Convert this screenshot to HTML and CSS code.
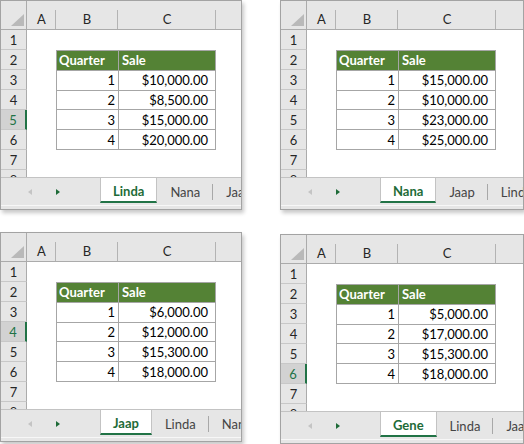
FILE: index.html
```html
<!DOCTYPE html>
<html lang="en">
<head>
<meta charset="utf-8" />
<title>Sheets Linda, Nana, Jaap and Gene</title>
<link rel="stylesheet" href="styles.css">
</head>
<body>

<main class="board">

<!-- Linda -->
<div class="panel">
	<div class="sheet">
		<div class="corner"></div>
		<div class="col">A</div><div class="col">B</div><div class="col">C</div><div class="col last"></div>
		<div class="row">1</div>
		<div class="row">2</div>
		<div class="row">3</div>
		<div class="row">4</div>
		<div class="row sel">5</div>
		<div class="row">6</div>
		<div class="row">7</div>
		<div class="row">8</div>
		<div class="data">
			<div class="th">Quarter</div><div class="th">Sale</div>
			<div class="q">1</div><div class="s">$10,000.00</div>
			<div class="q">2</div><div class="s">$8,500.00</div>
			<div class="q">3</div><div class="s">$15,000.00</div>
			<div class="q">4</div><div class="s">$20,000.00</div>
		</div>
	</div>
	<div class="tabbar">
		<div class="nav"><i class="prev"></i><i class="next"></i></div>
		<div class="tab active">Linda</div>
		<div class="tab">Nana</div>
		<div class="tab">Jaap</div>
	</div>
	<div class="status"></div>
</div>

<!-- Nana -->
<div class="panel">
	<div class="sheet">
		<div class="corner"></div>
		<div class="col">A</div><div class="col">B</div><div class="col">C</div><div class="col last"></div>
		<div class="row">1</div>
		<div class="row">2</div>
		<div class="row">3</div>
		<div class="row">4</div>
		<div class="row">5</div>
		<div class="row">6</div>
		<div class="row">7</div>
		<div class="row">8</div>
		<div class="data">
			<div class="th">Quarter</div><div class="th">Sale</div>
			<div class="q">1</div><div class="s">$15,000.00</div>
			<div class="q">2</div><div class="s">$10,000.00</div>
			<div class="q">3</div><div class="s">$23,000.00</div>
			<div class="q">4</div><div class="s">$25,000.00</div>
		</div>
	</div>
	<div class="tabbar">
		<div class="nav"><i class="prev"></i><i class="next"></i></div>
		<div class="tab active">Nana</div>
		<div class="tab">Jaap</div>
		<div class="tab">Linda</div>
	</div>
	<div class="status"></div>
</div>

<!-- Jaap -->
<div class="panel">
	<div class="sheet">
		<div class="corner"></div>
		<div class="col">A</div><div class="col">B</div><div class="col">C</div><div class="col last"></div>
		<div class="row">1</div>
		<div class="row">2</div>
		<div class="row">3</div>
		<div class="row sel">4</div>
		<div class="row">5</div>
		<div class="row">6</div>
		<div class="row">7</div>
		<div class="row">8</div>
		<div class="data">
			<div class="th">Quarter</div><div class="th">Sale</div>
			<div class="q">1</div><div class="s">$6,000.00</div>
			<div class="q">2</div><div class="s">$12,000.00</div>
			<div class="q">3</div><div class="s">$15,300.00</div>
			<div class="q">4</div><div class="s">$18,000.00</div>
		</div>
	</div>
	<div class="tabbar">
		<div class="nav"><i class="prev"></i><i class="next"></i></div>
		<div class="tab active">Jaap</div>
		<div class="tab">Linda</div>
		<div class="tab">Nana</div>
	</div>
	<div class="status"></div>
</div>

<!-- Gene -->
<div class="panel low">
	<div class="sheet">
		<div class="corner"></div>
		<div class="col">A</div><div class="col">B</div><div class="col">C</div><div class="col last"></div>
		<div class="row">1</div>
		<div class="row">2</div>
		<div class="row">3</div>
		<div class="row">4</div>
		<div class="row">5</div>
		<div class="row sel">6</div>
		<div class="row">7</div>
		<div class="row">8</div>
		<div class="data">
			<div class="th">Quarter</div><div class="th">Sale</div>
			<div class="q">1</div><div class="s">$5,000.00</div>
			<div class="q">2</div><div class="s">$17,000.00</div>
			<div class="q">3</div><div class="s">$15,300.00</div>
			<div class="q">4</div><div class="s">$18,000.00</div>
		</div>
	</div>
	<div class="tabbar">
		<div class="nav"><i class="prev"></i><i class="next"></i></div>
		<div class="tab active">Gene</div>
		<div class="tab">Linda</div>
		<div class="tab">Jaap</div>
	</div>
	<div class="status"></div>
</div>

</main>

</body>
</html>
```
FILE: styles.css
```css
body {
	margin: 0;
	background: #fff;
	font: 13px Lato, "Open Sans", sans-serif;
	color: #000;
}
.board {
	display: grid;
	grid-template-columns: 242px 244px;
	column-gap: 38px;
	row-gap: 22px;
	align-items: start;
}

/* --------------------------------- */

.panel {
	border: 1px solid #a3a3a3;
	box-shadow: 2px 3px 4px rgba(0,0,0,0.22);
	overflow: hidden;
	background: #e6e6e6;
}
.panel.low {
	margin-top: 2px;
}

.sheet {
	display: grid;
	grid-template-columns: 26px 29px 62px 98px 1fr;
	grid-template-rows: 29px repeat(8, 20px);
	height: 176px;
	overflow: hidden;
	background: #fff;
}
.sheet > div {
	box-sizing: border-box;
}

.corner {
	position: relative;
	background: #e6e6e6;
	border-right: 1px solid #ababab;
	border-bottom: 1px solid #ababab;
}
.corner::after {
	content: "";
	position: absolute;
	right: 2px; bottom: 3px;
	width: 13px; height: 12px;
	background: #b9b9b9;
	clip-path: polygon(100% 0, 100% 100%, 0 100%);
}

.col {
	display: flex;
	justify-content: center;
	align-items: flex-end;
	padding-bottom: 2px;
	line-height: 16px;
	color: #262626;
	border-bottom: 1px solid #ababab;
	background:
		linear-gradient(#b3b3b3, #b3b3b3) right bottom / 1px 19px no-repeat,
		#e6e6e6;
}
.col.last {
	background: #e6e6e6;
}

.row {
	grid-column: 1;
	display: flex;
	justify-content: center;
	align-items: center;
	color: #262626;
	background: #e6e6e6;
	border-right: 1px solid #ababab;
	border-bottom: 1px solid #c8c8c8;
}
.row.sel {
	background: #d2d2d2;
	color: #217346;
	border-right: 2px solid #217346;
}

/* --------------------------------- */

.data {
	grid-column: 3 / 5;
	grid-row: 3 / 8;
	display: grid;
	grid-template-columns: 61px 96px;
	grid-template-rows: repeat(5, 1fr);
	gap: 1px;
	padding: 1px;
	background: #a6a6a6;
}
.data > div {
	display: flex;
	align-items: center;
	background: #fff;
	white-space: nowrap;
}
.data .th {
	background: #548235;
	color: #fff;
	font-weight: bold;
	padding-left: 2px;
}
.data .th + .th {
	padding-left: 3px;
}
.data .q {
	justify-content: flex-end;
	padding-right: 3px;
}
.data .s {
	justify-content: flex-end;
	padding-right: 7px;
}

/* --------------------------------- */

.tabbar {
	display: flex;
	align-items: flex-start;
	height: 28px;
	box-sizing: border-box;
	border-top: 1px solid #c3c3c3;
	background: #e6e6e6;
	white-space: nowrap;
}
.nav {
	flex: none;
	width: 99px;
	height: 27px;
	box-sizing: border-box;
	display: flex;
	align-items: center;
	gap: 24px;
	padding-left: 27px;
}
.nav i {
	width: 0; height: 0;
	border-top: 3.5px solid transparent;
	border-bottom: 3.5px solid transparent;
}
.nav .prev {
	border-right: 4px solid #c4c4c4;
}
.nav .next {
	border-left: 4px solid #1e6b38;
}

.tab {
	flex: none;
	height: 27px;
	display: flex;
	align-items: center;
	padding: 0 13px;
	color: #444;
	background: linear-gradient(#a8a8a8, #a8a8a8) right center / 1px 16px no-repeat;
}
.tab.active {
	height: 25px;
	box-sizing: border-box;
	padding: 2px 12px 0;
	background: #fff;
	border-left: 1px solid #c3c3c3;
	border-right: 1px solid #c3c3c3;
	border-bottom: 2px solid #217346;
	color: #1e6b38;
	font-weight: bold;
}

.status {
	height: 4px;
	box-sizing: border-box;
	border-top: 1px solid #f7f7f7;
	background: #e6e6e6;
}
```
